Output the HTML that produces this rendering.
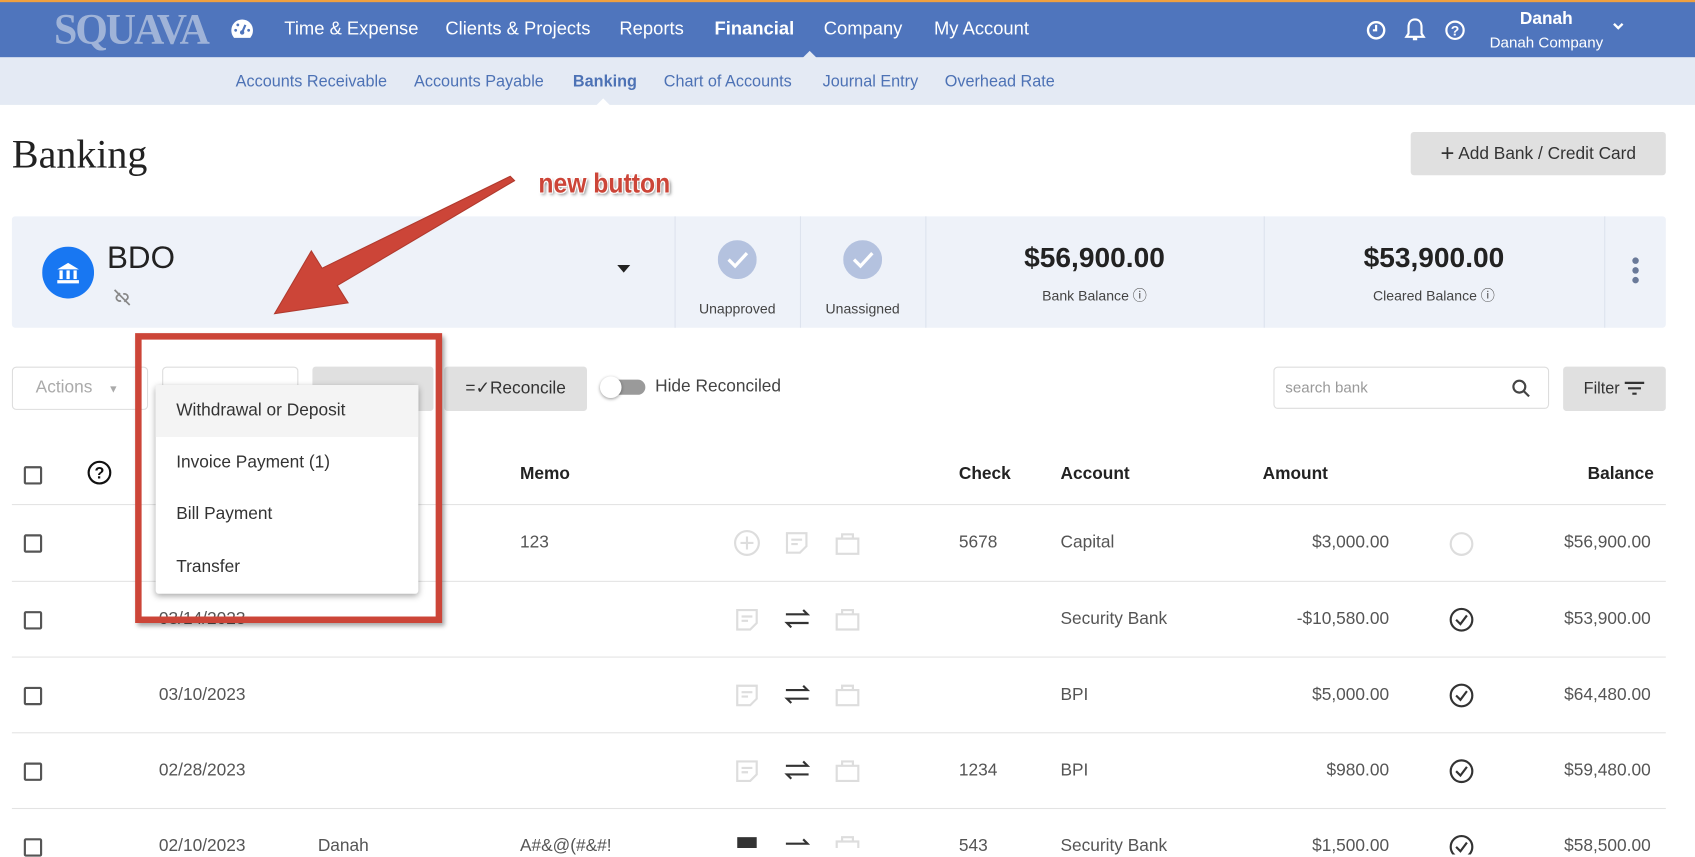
<!DOCTYPE html>
<html><head><meta charset="utf-8"><style>
*{box-sizing:border-box;margin:0;padding:0}
html,body{width:1695px;height:848px;overflow:hidden;background:#fff}
#w{position:absolute;left:0;top:0;width:1568px;height:784px;transform:scale(1.0810,1.0816);transform-origin:0 0;font-family:"Liberation Sans",sans-serif;color:#333}
.a{position:absolute;white-space:nowrap}
.nav{left:0;top:0;width:1568px;height:53px;background:#4f75bd;border-top:2px solid #f0a040}
.nv{top:17px;color:#fff;font-size:17px}
.sub{left:0;top:53px;width:1568px;height:44px;background:#e4eaf4}
.sv{top:67px;color:#4d72b5;font-size:15px}
.btn{background:#e0e0e0;border-radius:3px}
.vd{top:200px;width:1px;height:103px;background:#dde3ee}
.chk{width:17px;height:17px;border:2px solid #555;border-radius:2px}
.hl{left:11px;width:1530px;height:1px;background:#e3e3e3}
.th{font-size:16px;font-weight:bold;color:#222}
.td{font-size:16px;color:#555}
.mi{left:163px;font-size:16px;color:#333}
</style></head><body><div id="w">
<div class="a nav"></div>
<div class="a" style="left:50px;top:3px;font-family:'Liberation Serif',serif;font-size:40px;font-weight:bold;color:#9fb3d8;letter-spacing:-2px;transform:scaleX(0.97);transform-origin:0 0">SQUAVA</div>
<svg class="a" style="left:213px;top:17px" width="22" height="20" viewBox="0 0 22 20"><path d="M11 1a10 10 0 0 0-10 10c0 3 1 5 2.5 7h15c1.5-2 2.5-4 2.5-7A10 10 0 0 0 11 1z" fill="#fff"/><circle cx="11" cy="13" r="2" fill="#4f75bd"/><path d="M11 13l3-7" stroke="#4f75bd" stroke-width="2"/><circle cx="5" cy="11" r="1.3" fill="#4f75bd"/><circle cx="7" cy="6" r="1.3" fill="#4f75bd"/><circle cx="17" cy="11" r="1.3" fill="#4f75bd"/></svg>
<div class="a nv" style="left:263px">Time &amp; Expense</div>
<div class="a nv" style="left:412px">Clients &amp; Projects</div>
<div class="a nv" style="left:573px">Reports</div>
<div class="a nv" style="left:661px;font-weight:bold">Financial</div>
<div class="a nv" style="left:762px">Company</div>
<div class="a nv" style="left:864px">My Account</div>
<svg class="a" style="left:1263px;top:18px" width="20" height="20" viewBox="0 0 20 20"><circle cx="10" cy="10" r="7.5" fill="none" stroke="#fff" stroke-width="2.2"/><path d="M10 5v5h-3" stroke="#fff" stroke-width="2" fill="none"/></svg>
<svg class="a" style="left:1299px;top:16px" width="20" height="24" viewBox="0 0 20 24"><path d="M10 2c-4 0-6 3-6 7v6l-2 3h16l-2-3V9c0-4-2-7-6-7z" fill="none" stroke="#fff" stroke-width="2"/><path d="M8 20h4" stroke="#fff" stroke-width="2.4"/></svg>
<svg class="a" style="left:1336px;top:18px" width="20" height="20" viewBox="0 0 20 20"><circle cx="10" cy="10" r="8" fill="none" stroke="#fff" stroke-width="2"/><text x="10" y="15" text-anchor="middle" font-size="13" font-weight="bold" fill="#fff" font-family="Liberation Sans">?</text></svg>
<div class="a" style="left:1406px;top:9px;color:#fff;font-weight:bold;font-size:16px">Danah</div>
<div class="a" style="left:1378px;top:31px;color:#fff;font-size:14px">Danah Company</div>
<svg class="a" style="left:1491px;top:20px" width="12" height="9" viewBox="0 0 12 9"><path d="M2 2l4 4 4-4" stroke="#fff" stroke-width="2.2" fill="none"/></svg>
<div class="a sub"></div>
<div class="a" style="left:742px;top:47px;width:0;height:0;border-left:7px solid transparent;border-right:7px solid transparent;border-bottom:7px solid #e4eaf4"></div>
<div class="a" style="left:551px;top:91px;width:0;height:0;border-left:7px solid transparent;border-right:7px solid transparent;border-bottom:7px solid #fff"></div>
<div class="a sv" style="left:218px">Accounts Receivable</div>
<div class="a sv" style="left:383px">Accounts Payable</div>
<div class="a sv" style="left:530px;font-weight:bold">Banking</div>
<div class="a sv" style="left:614px">Chart of Accounts</div>
<div class="a sv" style="left:761px">Journal Entry</div>
<div class="a sv" style="left:874px">Overhead Rate</div>
<div class="a" style="left:11px;top:122px;font-family:'Liberation Serif',serif;font-size:37px;color:#222">Banking</div>
<div class="a btn" style="left:1305px;top:122px;width:236px;height:40px;font-size:16px;line-height:40px;text-align:center;color:#333"><span style="font-size:22px;vertical-align:-2px">+</span> Add Bank / Credit Card</div>
<div class="a" style="left:11px;top:200px;width:1530px;height:103px;background:#eef2f9;border-radius:3px"></div>
<div class="a vd" style="left:624px"></div><div class="a vd" style="left:740px"></div><div class="a vd" style="left:856px"></div><div class="a vd" style="left:1169px"></div><div class="a vd" style="left:1484px"></div>
<svg class="a" style="left:39px;top:228px" width="48" height="48" viewBox="0 0 48 48"><circle cx="24" cy="24" r="24" fill="#1877f2"/><path d="M14 21l10-6 10 6z" fill="#fff"/><rect x="16" y="22" width="3" height="8" fill="#fff"/><rect x="22.5" y="22" width="3" height="8" fill="#fff"/><rect x="29" y="22" width="3" height="8" fill="#fff"/><rect x="14" y="31" width="20" height="3" fill="#fff"/></svg>
<div class="a" style="left:99px;top:223px;font-size:29px;color:#222">BDO</div>
<svg class="a" style="left:103px;top:266px" width="20" height="18" viewBox="0 0 20 18"><path d="M8 5l-3 3a3 3 0 0 0 4 4M12 13l3-3a3 3 0 0 0-4-4M3 2l14 14" stroke="#888" stroke-width="1.6" fill="none"/></svg>
<div class="a" style="left:571px;top:245px;width:0;height:0;border-left:6px solid transparent;border-right:6px solid transparent;border-top:7px solid #222"></div>
<svg class="a" style="left:664px;top:222px" width="36" height="36" viewBox="0 0 36 36"><circle cx="18" cy="18" r="18" fill="#b4c2df"/><path d="M10 18l6 6 11-12" stroke="#fff" stroke-width="3" fill="none"/></svg>
<svg class="a" style="left:780px;top:222px" width="36" height="36" viewBox="0 0 36 36"><circle cx="18" cy="18" r="18" fill="#b4c2df"/><path d="M10 18l6 6 11-12" stroke="#fff" stroke-width="3" fill="none"/></svg>
<div class="a" style="left:624px;top:278px;width:116px;text-align:center;font-size:13px;color:#444">Unapproved</div>
<div class="a" style="left:740px;top:278px;width:116px;text-align:center;font-size:13px;color:#444">Unassigned</div>
<div class="a" style="left:856px;top:223px;width:313px;text-align:center;font-size:26px;font-weight:bold;color:#222">$56,900.00</div>
<div class="a" style="left:856px;top:263px;width:313px;text-align:center;font-size:13px;color:#444">Bank Balance ⓘ</div>
<div class="a" style="left:1169px;top:223px;width:315px;text-align:center;font-size:26px;font-weight:bold;color:#222">$53,900.00</div>
<div class="a" style="left:1169px;top:263px;width:315px;text-align:center;font-size:13px;color:#444">Cleared Balance ⓘ</div>
<div class="a" style="left:1510px;top:238px;width:6px;height:6px;border-radius:3px;background:#6a7a99;box-shadow:0 9px 0 #6a7a99,0 18px 0 #6a7a99"></div>
<!-- toolbar -->
<div class="a" style="left:11px;top:339px;width:126px;height:40px;border:1px solid #ddd;border-radius:4px;font-size:16px;color:#aaa;line-height:38px;padding-left:21px">Actions <span style="font-size:10px;margin-left:10px">▼</span></div>
<div class="a" style="left:150px;top:339px;width:126px;height:40px;border:1px solid #ddd;border-radius:4px"></div>
<div class="a btn" style="left:289px;top:339px;width:112px;height:41px"></div>
<div class="a btn" style="left:411px;top:339px;width:132px;height:41px;font-size:16px;line-height:41px;text-align:center;color:#333">=✓Reconcile</div>
<div class="a" style="left:558px;top:351px;width:39px;height:14px;border-radius:7px;background:#9a9a9a"></div>
<div class="a" style="left:555px;top:348px;width:20px;height:20px;border-radius:10px;background:#fff;box-shadow:0 1px 3px rgba(0,0,0,.4)"></div>
<div class="a" style="left:606px;top:349px;font-size:16px;color:#444">Hide Reconciled</div>
<div class="a" style="left:1178px;top:339px;width:255px;height:39px;border:1px solid #ddd;border-radius:4px;font-size:14px;color:#999;line-height:37px;padding-left:10px">search bank</div>
<svg class="a" style="left:1398px;top:350px" width="18" height="18" viewBox="0 0 18 18"><circle cx="7.5" cy="7.5" r="5.5" fill="none" stroke="#444" stroke-width="2"/><path d="M11.5 11.5l5 5" stroke="#444" stroke-width="2"/></svg>
<div class="a btn" style="left:1446px;top:339px;width:95px;height:41px;font-size:15px;line-height:41px;padding-left:19px;color:#333">Filter</div>
<svg class="a" style="left:1502px;top:352px" width="20" height="14" viewBox="0 0 20 14"><path d="M1 2h18M4 7h12M8 12h4" stroke="#333" stroke-width="2"/></svg>
<!-- table -->
<div class="a chk" style="left:22px;top:431px"></div>
<svg class="a" style="left:80px;top:425px" width="24" height="24" viewBox="0 0 24 24"><circle cx="12" cy="12" r="10" fill="none" stroke="#111" stroke-width="2"/><text x="12" y="17.5" text-anchor="middle" font-size="15" font-weight="bold" fill="#111" font-family="Liberation Sans">?</text></svg>
<div class="a th" style="left:481px;top:430px">Memo</div>
<div class="a th" style="left:887px;top:430px">Check</div>
<div class="a th" style="left:981px;top:430px">Account</div>
<div class="a th" style="left:1168px;top:430px">Amount</div>
<div class="a th" style="left:1430px;top:430px;width:100px;text-align:right">Balance</div>
<div class="a hl" style="top:466px"></div>
<div class="a hl" style="top:537px"></div>
<div class="a hl" style="top:607px"></div>
<div class="a hl" style="top:677px"></div>
<div class="a hl" style="top:747px"></div>
<div class="a chk" style="left:22px;top:494px"></div>
<div class="a chk" style="left:22px;top:565px"></div>
<div class="a chk" style="left:22px;top:635px"></div>
<div class="a chk" style="left:22px;top:705px"></div>
<div class="a chk" style="left:22px;top:775px"></div>
<div class="a td" style="left:481px;top:493px">123</div>
<div class="a td" style="left:147px;top:564px">03/14/2023</div>
<div class="a td" style="left:147px;top:634px">03/10/2023</div>
<div class="a td" style="left:147px;top:704px">02/28/2023</div>
<div class="a td" style="left:147px;top:774px">02/10/2023</div>
<div class="a td" style="left:294px;top:774px">Danah</div>
<div class="a td" style="left:481px;top:774px">A#&amp;@(#&amp;#!</div>
<div class="a td" style="left:887px;top:493px">5678</div>
<div class="a td" style="left:887px;top:704px">1234</div>
<div class="a td" style="left:887px;top:774px">543</div>
<div class="a td" style="left:981px;top:493px">Capital</div>
<div class="a td" style="left:981px;top:564px">Security Bank</div>
<div class="a td" style="left:981px;top:634px">BPI</div>
<div class="a td" style="left:981px;top:704px">BPI</div>
<div class="a td" style="left:981px;top:774px">Security Bank</div>
<div class="a td" style="left:1135px;top:493px;width:150px;text-align:right">$3,000.00</div>
<div class="a td" style="left:1135px;top:564px;width:150px;text-align:right">-$10,580.00</div>
<div class="a td" style="left:1135px;top:634px;width:150px;text-align:right">$5,000.00</div>
<div class="a td" style="left:1135px;top:704px;width:150px;text-align:right">$980.00</div>
<div class="a td" style="left:1135px;top:774px;width:150px;text-align:right">$1,500.00</div>
<div class="a td" style="left:1377px;top:493px;width:150px;text-align:right">$56,900.00</div>
<div class="a td" style="left:1377px;top:564px;width:150px;text-align:right">$53,900.00</div>
<div class="a td" style="left:1377px;top:634px;width:150px;text-align:right">$64,480.00</div>
<div class="a td" style="left:1377px;top:704px;width:150px;text-align:right">$59,480.00</div>
<div class="a td" style="left:1377px;top:774px;width:150px;text-align:right">$58,500.00</div>
<svg class="a" style="left:1340px;top:490px" width="24" height="300" viewBox="0 0 24 300">
<circle cx="12" cy="13" r="10" fill="none" stroke="#ddd" stroke-width="2"/>
<g fill="none" stroke="#333" stroke-width="2"><circle cx="12" cy="83" r="10"/><path d="M7 83l4 4 6-8"/><circle cx="12" cy="153" r="10"/><path d="M7 153l4 4 6-8"/><circle cx="12" cy="223" r="10"/><path d="M7 223l4 4 6-8"/><circle cx="12" cy="293" r="10"/><path d="M7 293l4 4 6-8"/></g></svg>
<svg class="a" style="left:678px;top:488px" width="122" height="296" viewBox="0 0 122 296">
<g fill="none" stroke="#ddd" stroke-width="2">
<circle cx="13" cy="14" r="11"/><path d="M13 8v12M7 14h12"/>
<path d="M50 5h18v12l-6 6H50z M54 11h10M54 15h6"/>
<path d="M96 10h20v14H96z M101 10V6h10v4"/>
<path d="M4 76h18v12l-6 6H4z M8 82h10M8 86h6"/><path d="M96 80h20v14H96z M101 80V76h10v4"/>
<path d="M4 146h18v12l-6 6H4z M8 152h10M8 156h6"/><path d="M96 150h20v14H96z M101 150V146h10v4"/>
<path d="M4 216h18v12l-6 6H4z M8 222h10M8 226h6"/><path d="M96 220h20v14H96z M101 220V216h10v4"/>
<path d="M96 290h20v14H96z M101 290V286h10v4"/></g>
<g fill="none" stroke="#333" stroke-width="2"><path d="M49 80h20l-4-4M70 88H50l4 4"/><path d="M49 150h20l-4-4M70 158H50l4 4"/><path d="M49 220h20l-4-4M70 228H50l4 4"/><path d="M49 292h20l-4-4"/></g>
<rect x="4" y="286" width="18" height="14" fill="#333"/></svg>
<!-- dropdown -->
<div class="a" style="left:144px;top:356px;width:243px;height:193px;background:#fff;border-radius:3px;box-shadow:0 2px 6px rgba(0,0,0,.35)"></div>
<div class="a" style="left:144px;top:356px;width:243px;height:48px;background:#f4f4f4"></div>
<div class="a mi" style="top:371px">Withdrawal or Deposit</div>
<div class="a mi" style="top:419px">Invoice Payment (1)</div>
<div class="a mi" style="top:467px">Bill Payment</div>
<div class="a mi" style="top:516px">Transfer</div>
<!-- annotation -->
<div class="a" style="left:125px;top:308px;width:284px;height:268px;border:6px solid #cc4538;box-shadow:2px 3px 4px rgba(0,0,0,.35)"></div>
<svg class="a" style="left:240px;top:160px" width="250" height="145" viewBox="0 0 250 145"><path d="M236 7 L72 104 L82 120 L14 130 L48 72 L58 88 L232 3 Z" fill="#cc4538" stroke="#b03a2e" stroke-width="1"/></svg>
<div class="a" style="left:498px;top:154px;font-size:26px;font-weight:bold;color:#cc4538;text-shadow:1px 1px 0 #fff,-1px -1px 0 #fff,1px -1px 0 #fff,-1px 1px 0 #fff,2px 2px 3px rgba(0,0,0,.5);transform:scaleX(.88);transform-origin:0 0">new button</div>
</div></body></html>
